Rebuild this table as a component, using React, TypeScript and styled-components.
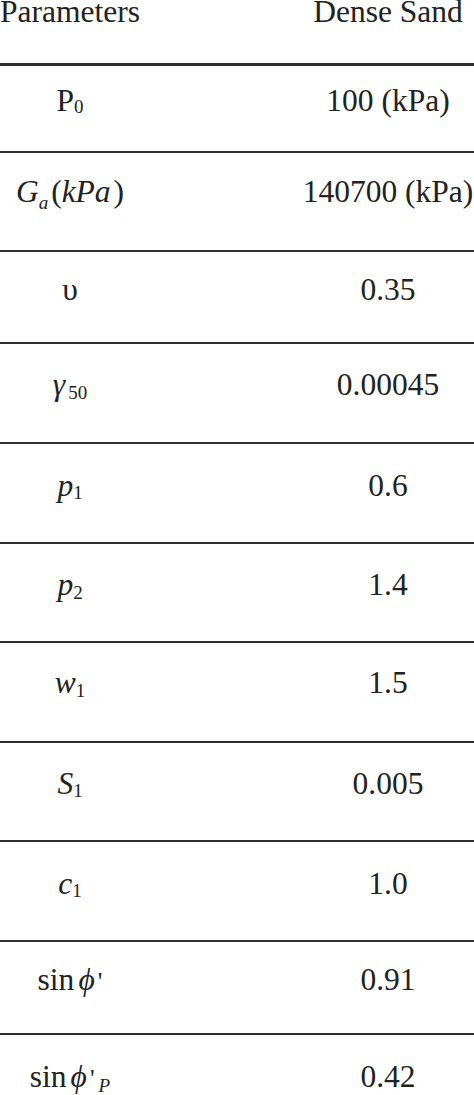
import React from 'react';
import styled, { createGlobalStyle } from 'styled-components';

type Param = {
    label: React.ReactNode;
    value: string;
    height: number;
    top: number;
    last?: boolean;
};

const GlobalStyle = createGlobalStyle`
    html, body {
        margin: 0;
        padding: 0;
        background: #ffffff;
        overflow: hidden;
    }
    body {
        font-family: "Liberation Serif", "DejaVu Serif", serif;
        color: #222222;
    }
`

const Table = styled.div`
                width: 474px;
                height: 1095px;
                display: flex;
                flex-direction: column;
                overflow: hidden;
                font-family: "Liberation Serif", "DejaVu Serif", serif;
                `
const HeaderRow = styled.div`
                flex: none;
                height: 28.5px;
                display: flex;
                justify-content: space-between;
                align-items: flex-end;
                padding-bottom: 34px;
                border-bottom: 3px solid #2e2e2e;
                `
const Row = styled.div<{ $height: number; $top: number; $last?: boolean }>`
                flex: none;
                height: ${(p) => p.$height}px;
                box-sizing: border-box;
                padding-top: ${(p) => p.$top}px;
                display: flex;
                justify-content: space-between;
                align-items: flex-start;
                border-bottom: ${(p) => (p.$last ? 'none' : '2px solid #303030')};
                `
const Label = styled.div`
                width: 140px;
                text-align: center;
                font-family: "Liberation Serif", serif;
                font-size: 31.5px;
                line-height: 34px;
                white-space: nowrap;
                `
const Value = styled.div`
                width: 172px;
                text-align: center;
                font-family: "Liberation Serif", serif;
                font-size: 31.5px;
                line-height: 34px;
                white-space: nowrap;
                `
const I = styled.span`
                font-style: italic;
                `
const Sub = styled.span<{ $shift: number; $italic?: boolean; $gap?: number }>`
                font-size: 19px;
                line-height: 0;
                font-style: ${(p) => (p.$italic ? 'italic' : 'normal')};
                vertical-align: -${(p) => p.$shift}px;
                margin-left: ${(p) => p.$gap ?? 0}px;
                `
const Paren = styled.span`
                margin-left: 3px;
                `
const Phi = styled.span`
                font-style: italic;
                margin-left: 4px;
                `
const Prime = styled.span`
                margin-left: 3px;
                font-size: 26px;
                `

const params: Param[] = [
    {
        label: <>P<Sub $shift={2}>0</Sub></>,
        value: '100 (kPa)', height: 87.8, top: 18,
    },
    {
        label: <><I>G</I><Sub $italic $shift={7}>a</Sub><Paren>(</Paren><I>kPa</I><Paren>)</Paren></>,
        value: '140700 (kPa)', height: 98.4, top: 22,
    },
    {
        label: <>υ</>,
        value: '0.35', height: 92.6, top: 21.5,
    },
    {
        label: <><I>γ</I><Sub $shift={4} $gap={3}>50</Sub></>,
        value: '0.00045', height: 99.7, top: 24.2,
    },
    {
        label: <><I>p</I><Sub $shift={3}>1</Sub></>,
        value: '0.6', height: 99.7, top: 25.5,
    },
    {
        label: <><I>p</I><Sub $shift={4}>2</Sub></>,
        value: '1.4', height: 99, top: 24.8,
    },
    {
        label: <><I>w</I><Sub $shift={4}>1</Sub></>,
        value: '1.5', height: 100, top: 23.8,
    },
    {
        label: <><I>S</I><Sub $shift={3}>1</Sub></>,
        value: '0.005', height: 99.3, top: 24.8,
    },
    {
        label: <><I>c</I><Sub $shift={3}>1</Sub></>,
        value: '1.0', height: 99.7, top: 25.5,
    },
    {
        label: <>sin<Phi>ϕ</Phi><Prime>'</Prime></>,
        value: '0.91', height: 93.6, top: 21.8,
    },
    {
        label: <>sin<Phi>ϕ</Phi><Prime>'</Prime><Sub $italic $shift={5} $gap={4}>P</Sub></>,
        value: '0.42', height: 120, top: 25.2, last: true,
    },
];

const App: React.FC = () => {
    return (
        <>
            <GlobalStyle />
            <Table>
                <HeaderRow>
                    <Label>Parameters</Label>
                    <Value>Dense Sand</Value>
                </HeaderRow>
                {params.map((p, index) => (
                    <Row key={index} $height={p.height} $top={p.top} $last={p.last}>
                        <Label>{p.label}</Label>
                        <Value>{p.value}</Value>
                    </Row>
                ))}
            </Table>
        </>
    )
}

export default App;
